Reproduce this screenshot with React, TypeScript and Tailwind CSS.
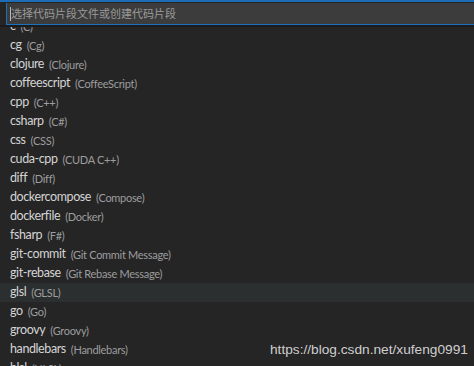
import React from "react";

const items: [string, string][] = [
  ["c", "C"],
  ["cg", "Cg"],
  ["clojure", "Clojure"],
  ["coffeescript", "CoffeeScript"],
  ["cpp", "C++"],
  ["csharp", "C#"],
  ["css", "CSS"],
  ["cuda-cpp", "CUDA C++"],
  ["diff", "Diff"],
  ["dockercompose", "Compose"],
  ["dockerfile", "Docker"],
  ["fsharp", "F#"],
  ["git-commit", "Git Commit Message"],
  ["git-rebase", "Git Rebase Message"],
  ["glsl", "GLSL"],
  ["go", "Go"],
  ["groovy", "Groovy"],
  ["handlebars", "Handlebars"],
  ["hlsl", "HLSL"],
];

export default function App() {
  return (
    <div
      className="relative w-[474px] h-[366px] overflow-hidden bg-[#252526]"
      style={{ fontFamily: 'Lato, "Noto Sans CJK SC", sans-serif' }}
    >
      <div className="h-[2px] bg-[#1c6db5]" />
      <div className="pl-[6px] pt-[1px]">
        <div className="h-[22px] bg-[#3c3c3c] border-l border-b border-[#1b73c0] flex items-center pl-[3px]">
          <span className="w-px h-[14px] bg-[#bbbbbb]" />
          <span
            className="text-[11px] text-[#9a9a9a] leading-none"
            style={{ fontFamily: '"Noto Sans CJK SC", sans-serif' }}
          >
            选择代码片段文件或创建代码片段
          </span>
        </div>
      </div>
      <div className="h-[2px] bg-[#1b1b1c]" />
      <div className="h-[340px] overflow-hidden">
        <div className="-mt-[10px]">
          {items.map(([name, desc]) => (
            <div
              key={name}
              className={
                "h-[19px] flex items-center pl-[10px] " +
                (name === "glsl" ? "bg-[#2c2f30]" : "")
              }
            >
              <span className="text-[12.5px] tracking-[-0.4px] text-[#d4d4d4] leading-none">
                {name}
              </span>
              <span className="ml-[5px] text-[11px] tracking-[-0.3px] text-[#9d9d9d] leading-none">
                ({desc})
              </span>
            </div>
          ))}
        </div>
      </div>
      <div
        className="absolute left-[270px] top-[343px] text-[13.7px] text-[#cfcfcf] leading-none"
        style={{ fontFamily: '"Liberation Sans", Arial, sans-serif' }}
      >
        https://blog.csdn.net/xufeng0991
      </div>
    </div>
  );
}
